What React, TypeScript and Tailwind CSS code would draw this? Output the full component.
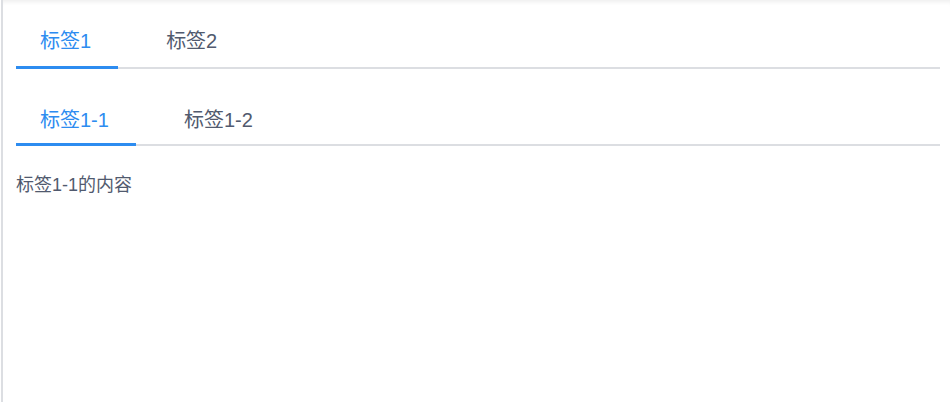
import React, { useState } from 'react';

type TabDef = { key: string; label: string };

const Tabs: React.FC<{
  tabs: TabDef[];
  active: string;
  onChange: (k: string) => void;
  itemClass: string;
}> = ({ tabs, active, onChange, itemClass }) => (
  <div className="flex gap-6 border-b-2 border-[#dcdee2]">
    {tabs.map(t => {
      const on = t.key === active;
      return (
        <div
          key={t.key}
          onClick={() => onChange(t.key)}
          className={`${itemClass} -mb-[2px] border-b-[3px] pl-6 pr-[27px] text-[20px] leading-[28px] cursor-pointer ${
            on ? 'border-[#2d8cf0] text-[#2d8cf0]' : 'border-transparent text-[#515a6e]'
          }`}
        >
          {t.label}
        </div>
      );
    })}
  </div>
);

export default function App() {
  const [outer, setOuter] = useState('1');
  const [inner, setInner] = useState('1-1');

  return (
    <div
      className="ml-[1px] h-[402px] border-l-2 border-[#dcdee2] pl-[13px] pr-[10px] pt-4 shadow-[inset_0_5px_4px_-3px_rgba(0,0,0,0.07)] bg-white"
      style={{ fontFamily: '"Liberation Sans", "Noto Sans CJK SC", sans-serif' }}
    >
      <Tabs
        tabs={[
          { key: '1', label: '标签1' },
          { key: '2', label: '标签2' },
        ]}
        active={outer}
        onChange={setOuter}
        itemClass="pt-[11px] pb-[11px]"
      />

      {outer === '1' ? (
        <div className="mt-6">
          <Tabs
            tabs={[
              { key: '1-1', label: '标签1-1' },
              { key: '1-2', label: '标签1-2' },
            ]}
            active={inner}
            onChange={setInner}
            itemClass="pt-[13px] pb-[9px]"
          />
          <div className="mt-[27px] text-[18px] leading-[24px] text-[#515a6e]">
            {inner === '1-1' ? '标签1-1的内容' : '标签1-2的内容'}
          </div>
        </div>
      ) : (
        <div className="mt-6 text-[18px] leading-[24px] text-[#515a6e]">标签2的内容</div>
      )}
    </div>
  );
}
